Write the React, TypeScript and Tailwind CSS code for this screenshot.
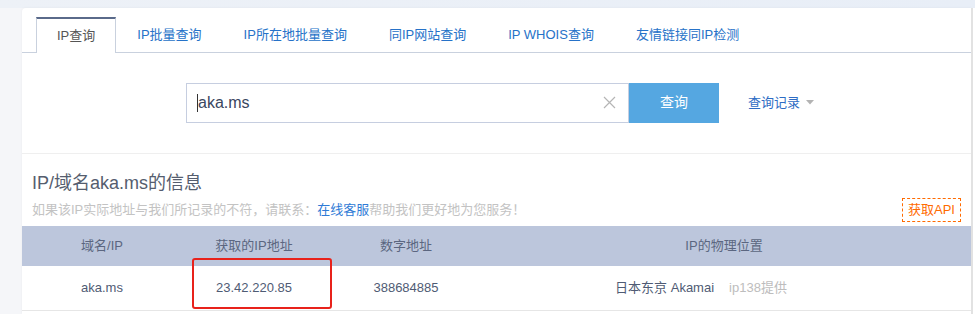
import React from 'react'

const FONT = { fontFamily: '"Liberation Sans", "Noto Sans CJK SC", sans-serif' }

const tabs = ['IP查询', 'IP批量查询', 'IP所在地批量查询', '同IP网站查询', 'IP WHOIS查询', '友情链接同IP检测']

function Tabs() {
  return (
    <div className="flex h-[45px] items-end border-b border-[#c9d1de] pl-[14px]">
      {tabs.map((t, i) =>
        i === 0 ? (
          <div
            key={t}
            className="mb-[-1px] flex h-[36px] items-center border-x border-t-2 border-x-[#c9d1de] border-t-[#5a6a8a] bg-white px-[20px] text-[13px] text-[#555]"
          >
            {t}
          </div>
        ) : (
          <div key={t} className="flex h-[35px] items-center border-x border-transparent px-[20px] text-[13px] text-[#2672c8]">
            {t}
          </div>
        )
      )}
    </div>
  )
}

function SearchBar() {
  return (
    <div className="flex h-[101px] items-center border-b border-[#efefef] pl-[164px] pb-[1px]">
      <div className="flex h-[40px] w-[443px] items-center border border-[#c6cee0] bg-white pl-[10px] pr-[12px]">
        <span className="h-[18px] w-px bg-[#333]" />
        <span className="flex-1 text-[16px] text-[#3a4660]">aka.ms</span>
        <svg width="13" height="13" viewBox="0 0 13 13">
          <path d="M1 1 L12 12 M12 1 L1 12" stroke="#b5b5b5" strokeWidth="1.2" fill="none" />
        </svg>
      </div>
      <button className="flex h-[40px] w-[90px] items-center justify-center bg-[#55a7e1] text-[14px] text-white">查询</button>
      <div className="ml-[29px] flex items-center gap-[6px] text-[13px] text-[#2e6cc4]">
        查询记录
        <svg width="8" height="5" viewBox="0 0 8 5">
          <path d="M0 0 L8 0 L4 4.5 Z" fill="#b3b3b3" />
        </svg>
      </div>
    </div>
  )
}

function InfoTable() {
  return (
    <div className="text-[13px]">
      <div className="grid h-[40px] grid-cols-[160px_144px_160px_1fr] items-center bg-[#bcc6dc] pr-[9px] text-[#5b6680]">
        <div className="text-center">域名/IP</div>
        <div className="text-center">获取的IP地址</div>
        <div className="text-center">数字地址</div>
        <div className="text-center">IP的物理位置</div>
      </div>
      <div className="relative grid h-[45px] grid-cols-[160px_144px_160px_1fr] items-center border-b border-[#e6e6e6] pr-[9px] text-[#4f5b74]">
        <div className="text-center">aka.ms</div>
        <div className="text-center">23.42.220.85</div>
        <div className="text-center">388684885</div>
        <div className="flex justify-center pr-[46px]">
          <span>日本东京 Akamai</span>
          <span className="ml-[15px] text-[#bdbdbd]">ip138提供</span>
        </div>
        <div className="absolute left-[170px] top-[-8px] h-[51px] w-[140px] rounded-[3px] border-2 border-[#e8221b]" />
      </div>
    </div>
  )
}

export default function App() {
  return (
    <div className="flex h-[314px] w-[975px] flex-col overflow-hidden bg-[#f5f6f9]" style={FONT}>
      <div className="h-[8px] bg-gradient-to-r from-[#edf1f7] to-[#e8eef7]" />
      <div className="flex flex-1">
        <div className="w-[22px] bg-[#f5f6f9]" />
        <div className="w-[949px] rounded-tl-[4px] bg-white shadow-[0_0_3px_rgba(0,0,0,0.05)]">
          <Tabs />
          <SearchBar />
          <div className="px-[10px] pt-[17px]">
            <div className="text-[18px] leading-[24px] text-[#555d6e]">IP/域名aka.ms的信息</div>
            <div className="mt-[3px] flex items-center justify-between">
              <div className="text-[13px] text-[#c3c3c3]">
                如果该IP实际地址与我们所记录的不符，请联系：<span className="text-[#2f7bd6]">在线客服</span>帮助我们更好地为您服务！
              </div>
              <div className="flex h-[24px] items-center border border-dashed border-[#ff6a00] px-[5px] text-[13px] text-[#ff6a00]">
                获取API
              </div>
            </div>
          </div>
          <div className="mt-[4px]">
            <InfoTable />
          </div>
        </div>
        <div className="w-[2px] bg-[#e2e2e2]" />
        <div className="flex-1 bg-white" />
      </div>
    </div>
  )
}
